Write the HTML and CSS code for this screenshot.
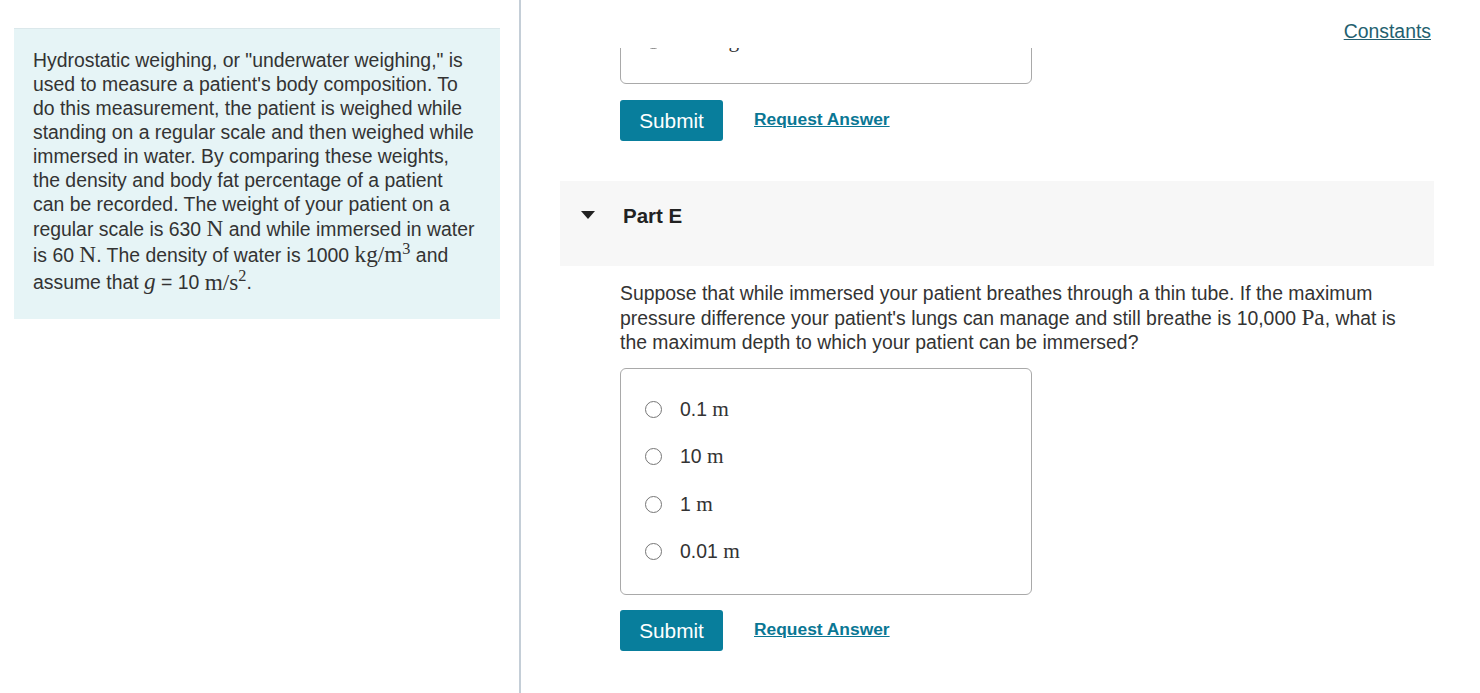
FILE: index.html
```html
<!DOCTYPE html>
<html lang="en">
<head>
<meta charset="utf-8">
<title>Part E</title>
<link rel="stylesheet" href="styles.css">
</head>
<body>
<div class="page">
  <aside class="left">
    <div class="intro">
      Hydrostatic weighing, or "underwater weighing," is used to measure a patient's body composition. To do this measurement, the patient is weighed while standing on a regular scale and then weighed while immersed in water. By comparing these weights, the density and body fat percentage of a patient can be recorded. The weight of your patient on a regular scale is 630 <span class="m">N</span> and while immersed in water is 60 <span class="m">N</span>. The density of water is 1000 <span class="m">kg/m<sup>3</sup></span> and assume that <span class="m i">g</span> = 10 <span class="m">m/s<sup class="hi">2</sup></span>.
    </div>
  </aside>
  <main class="right">
    <header class="topbar"><a class="constants" href="#">Constants</a></header>
    <div class="viewport">
      <div class="scroll">
        <div class="choices prev">
          <label class="option"><span class="radio"></span><span>0.57 <span class="m">m</span></span></label>
          <label class="option"><span class="radio"></span><span>0.75 <span class="m">m</span></span></label>
          <label class="option"><span class="radio"></span><span>1.05 <span class="m">m</span></span></label>
          <label class="option"><span class="radio"></span><span>950 <span class="m">kg/m<sup>3</sup></span></span></label>
        </div>
        <div class="actions">
          <button class="submit" type="button">Submit</button>
          <a class="request" href="#">Request Answer</a>
        </div>

        <section class="part">
          <div class="part-head">
            <span class="caret"></span>
            <h2>Part E</h2>
          </div>
          <p class="question">Suppose that while immersed your patient breathes through a thin tube. If the maximum pressure difference your patient's lungs can manage and still breathe is 10,000 <span class="m">Pa</span>, what is the maximum depth to which your patient can be immersed?</p>
          <div class="choices">
            <label class="option"><span class="radio"></span><span>0.1 <span class="m">m</span></span></label>
            <label class="option"><span class="radio"></span><span>10 <span class="m">m</span></span></label>
            <label class="option"><span class="radio"></span><span>1 <span class="m">m</span></span></label>
            <label class="option"><span class="radio"></span><span>0.01 <span class="m">m</span></span></label>
          </div>
          <div class="actions">
            <button class="submit" type="button">Submit</button>
            <a class="request" href="#">Request Answer</a>
          </div>
        </section>
      </div>
    </div>
  </main>
</div>
</body>
</html>
```

FILE: styles.css
```css
* { box-sizing: border-box; }

html, body {
  margin: 0;
  padding: 0;
  background: #ffffff;
}

body {
  font-family: "Liberation Sans", Arial, sans-serif;
  font-size: 19.4px;
  line-height: 24px;
  color: #333333;
}

.page {
  display: flex;
  height: 693px;
  overflow: hidden;
}

.left {
  width: 521px;
  flex: 0 0 521px;
  border-right: 2px solid #c4ced7;
  padding: 28px 19px 0 14px;
}

.intro {
  background: #e6f4f6;
  border-top: 1px solid #dbe8eb;
  padding: 19px 22px 24px 19px;
  color: #333333;
}

.m {
  font-family: "Liberation Serif", "Times New Roman", serif;
  font-size: 1.2em;
}

.i { font-style: italic; }

sup {
  font-size: 0.7em;
  line-height: 1;
  vertical-align: 0.5em;
}

sup.hi {
  vertical-align: 0.58em;
}

.right {
  flex: 1;
  display: flex;
  flex-direction: column;
  min-width: 0;
}

.topbar {
  height: 48px;
  flex: 0 0 48px;
  padding: 19px 49px 0 0;
  text-align: right;
}

.constants {
  color: #245f6f;
  text-decoration: underline;
}

.viewport {
  flex: 1;
  overflow: hidden;
}

.scroll {
  padding: 0 66px 0 99px;
}

.choices {
  width: 412px;
  height: 227px;
  border: 1px solid #a9a9a9;
  border-radius: 6px;
  padding: 16px 24px 19px 24px;
  margin-top: 14px;
}

.choices.prev {
  margin-top: -191px;
}

.option {
  display: flex;
  align-items: center;
  gap: 18px;
  height: 47.5px;
  color: #333333;
}

.option .m {
  font-size: 1.1em;
}

.radio {
  width: 17px;
  height: 17px;
  flex: 0 0 17px;
  border: 1px solid #767676;
  border-radius: 50%;
  background: #ffffff;
  margin-top: 1px;
}

.actions {
  display: flex;
  align-items: center;
  gap: 31px;
  margin-top: 15px;
}

.choices.prev + .actions {
  margin-top: 16px;
}

.submit {
  width: 103px;
  height: 41px;
  border: none;
  border-radius: 3px;
  background: #087e9c;
  color: #ffffff;
  font-family: "Liberation Sans", Arial, sans-serif;
  font-size: 20.8px;
  padding: 0;
  cursor: pointer;
}

.request {
  font-weight: bold;
  font-size: 17.4px;
  color: #0a7794;
  text-decoration: underline;
  margin-bottom: 4px;
}

.part-head {
  display: flex;
  align-items: flex-start;
  height: 85px;
  margin: 40px -20px 0 -60px;
  padding: 23px 0 0 21px;
  background: #f7f7f7;
}

.caret {
  width: 0;
  height: 0;
  margin-top: 7px;
  border-left: 7.5px solid transparent;
  border-right: 7.5px solid transparent;
  border-top: 8px solid #222222;
}

.part-head h2 {
  margin: 0 0 0 28px;
  font-size: 20.5px;
  line-height: 24px;
  font-weight: bold;
  color: #222222;
}

.question {
  margin: 15px 0 0 0;
}
```
